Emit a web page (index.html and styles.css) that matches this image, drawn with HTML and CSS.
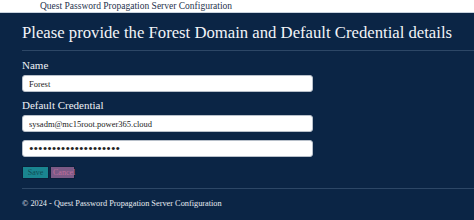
FILE: index.html
```html
<!DOCTYPE html>
<html lang="en">
<head>
    <meta charset="UTF-8">
    <meta name="viewport" content="width=device-width, initial-scale=1.0">
    <title>Quest Password Propagation Server Configuration</title>
    <link rel="stylesheet" href="styles.css">
</head>
<body>
    <header class="topbar">
        <span class="brand">Quest Password Propagation Server Configuration</span>
    </header>

    <main class="config-main">
        <h2 class="title">Please provide the Forest Domain and Default Credential details</h2>
        <hr class="rule">

        <form class="config-form">
            <label class="field-label">Name</label>
            <input class="field" type="text" value="Forest">

            <label class="field-label">Default Credential</label>
            <input class="field" type="text" value="sysadm@mc15root.power365.cloud">
            <input class="field" type="password" value="passwordpassword1234">

            <div class="actions">
                <button class="btn save" type="button">Save</button>
                <button class="btn cancel" type="button">Cancel</button>
            </div>
        </form>

        <hr class="rule footer-rule">
        <footer class="footer">&copy; 2024 - Quest Password Propagation Server Configuration</footer>
    </main>
</body>
</html>
```

FILE: styles.css
```css
body {
    margin: 0;
    background-color: #0b2545;
}
* {
    font-family: "Liberation Serif", "Times New Roman", serif;
    box-sizing: border-box;
}
.topbar {
    background-color: #fff;
    height: 13px;
    padding-left: 40px;
    border-bottom: 1px solid #c9d3de;
}
.brand {
    font-size: 9.5px;
    line-height: 13px;
    color: #26334d;
    display: block;
}
.config-main {
    padding: 0 0 20px 22px;
}
.title {
    font-size: 16.7px;
    font-weight: normal;
    color: #f2f4f8;
    margin: 0;
    padding-top: 9px;
    line-height: 22px;
}
.rule {
    border: 0;
    border-top: 1px solid #2d4766;
    margin: 6px 0 0 0;
}
.footer-rule {
    margin-top: 9px;
}
.config-form {
    display: flex;
    flex-direction: column;
    align-items: flex-start;
    padding-top: 7px;
}
.field-label {
    color: #eef1f5;
    font-size: 11px;
    line-height: 14px;
    margin-bottom: 3px;
}
.field {
    width: 291px;
    height: 17px;
    border: 1px solid #b8c0ca;
    border-radius: 3px;
    background: #fff;
    font-size: 8.5px;
    padding: 0 6px;
    color: #222;
    margin-bottom: 8px;
}
.field:first-of-type {
    margin-bottom: 6px;
}
.field[type="password"] {
    font-size: 13px;
    margin-bottom: 9px;
}
.actions {
    display: flex;
    gap: 1px;
}
.btn {
    font-size: 8px;
    height: 13px;
    padding: 0 2px;
    border: 1px solid #0a1f3a;
}
.save {
    background-color: #1a8590;
    color: #0f4d55;
    width: 27px;
}
.cancel {
    background-color: #7b5a86;
    color: #c0709c;
    width: 25px;
}
.footer {
    color: #e8ecf2;
    font-size: 8.3px;
    padding-top: 10px;
}
```
